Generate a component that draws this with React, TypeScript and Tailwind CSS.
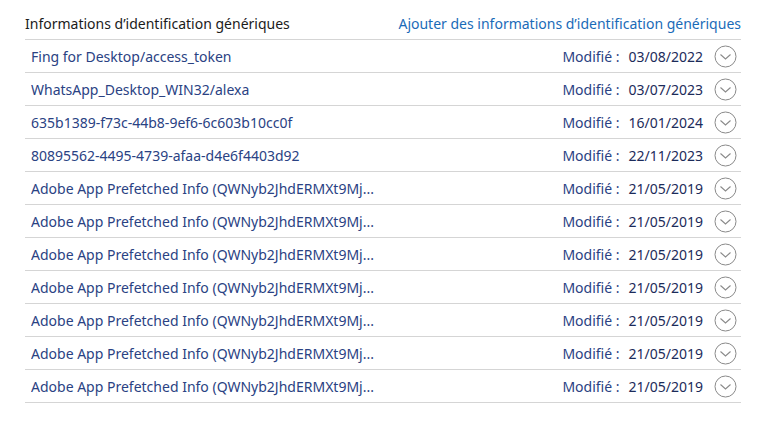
import React from "react";

type Cred = { name: string; date: string };

const creds: Cred[] = [
  { name: "Fing for Desktop/access_token", date: "03/08/2022" },
  { name: "WhatsApp_Desktop_WIN32/alexa", date: "03/07/2023" },
  { name: "635b1389-f73c-44b8-9ef6-6c603b10cc0f", date: "16/01/2024" },
  { name: "80895562-4495-4739-afaa-d4e6f4403d92", date: "22/11/2023" },
  ...Array.from({ length: 7 }, () => ({
    name: "Adobe App Prefetched Info (QWNyb2JhdERMXt9Mj...",
    date: "21/05/2019",
  })),
];

function Chevron() {
  return (
    <svg width="23" height="23" viewBox="0 0 23 23" className="shrink-0">
      <circle cx="11.5" cy="11.5" r="10.5" fill="none" stroke="#8a8a8a" strokeWidth="1" />
      <path d="M6.5 9.5 L11.5 14 L16.5 9.5" fill="none" stroke="#8a8a8a" strokeWidth="1.1" />
    </svg>
  );
}

function Row({ cred }: { cred: Cred }) {
  return (
    <div className="flex h-[33px] items-center border-b border-[#d5d5d5] pl-[6px] pr-[4px]">
      <span className="flex-1 truncate text-[#2a4283]">{cred.name}</span>
      <span className="text-[#2a4283]">Modifié :</span>
      <span className="ml-[9px] mr-[11px] text-[#1c2b5a]">{cred.date}</span>
      <Chevron />
    </div>
  );
}

export default function App() {
  return (
    <div
      className="min-h-[429px] w-[764px] bg-white px-[25px] pt-[13px] text-[14px]"
      style={{ fontFamily: '"Noto Sans", "Open Sans", sans-serif' }}
    >
      <div className="flex w-[716px] items-center justify-between border-b border-[#d5d5d5] pb-[5px]">
        <span className="text-[#1b1b1b]">Informations d’identification génériques</span>
        <span className="text-[#1a6bb8]">Ajouter des informations d’identification génériques</span>
      </div>
      <div className="w-[716px]">
        {creds.map((c, i) => (
          <Row key={i} cred={c} />
        ))}
      </div>
    </div>
  );
}
